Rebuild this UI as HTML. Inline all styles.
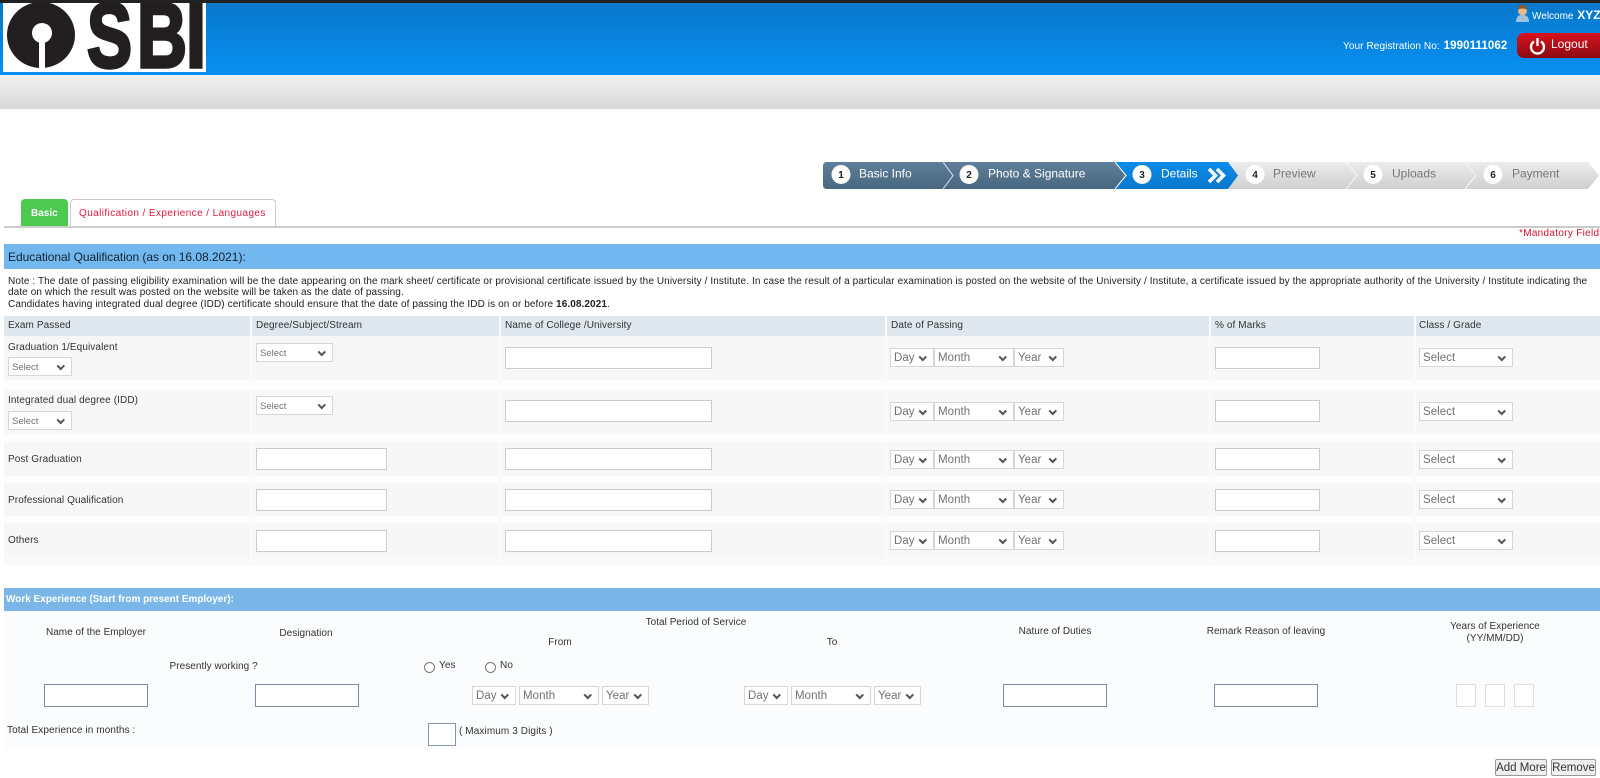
<!DOCTYPE html>
<html lang="en"><head><meta charset="utf-8"><title>SBI Application - Details</title>
<style>
html,body{margin:0;padding:0;background:#fff}
body{width:1600px;height:778px;position:relative;overflow:hidden;font-family:"Liberation Sans",sans-serif;font-size:10px;color:#333}
.a{position:absolute}
.t{position:absolute;white-space:nowrap;line-height:12px;letter-spacing:.1px}
.c{transform:translateX(-50%);letter-spacing:.03px}
.r{position:absolute;left:4px;width:1596px;background:#f7f7f7}
.g{position:absolute;left:4px;width:1596px;background:#fdfdfd}
.i{position:absolute;box-sizing:border-box;background:#fff;border:1px solid #ccc}
.w{border:1px solid #7d8aa3;background:#fff}
.sel{position:absolute;display:block;box-sizing:border-box;height:19px;background:#fff;border:1px solid #d6d6d6}
.sel select{display:block;width:100%;height:100%;box-sizing:border-box;margin:0;padding:1px 0 0 3px;border:0;outline:0;background:transparent;appearance:none;-webkit-appearance:none;font:11.5px "Liberation Sans",sans-serif;letter-spacing:.05px;color:#727272;border-radius:0}
.sel.s select{font-size:9.5px;letter-spacing:0}
.sel::after{content:"";position:absolute;right:8px;top:50%;margin-top:-4px;width:3.5px;height:3.5px;border-right:2px solid #555;border-bottom:2px solid #555;transform:rotate(45deg)}
.h{position:absolute;top:316px;height:20px;background:#dfe7ef}
.sep{position:absolute;width:2px;top:316px;height:249px;background:#fbfbfb}
</style></head><body>

<div class="a" style="left:0;top:0;width:1600px;height:3px;background:#222"></div>
<div class="a" style="left:0;top:3px;width:1600px;height:72px;background:linear-gradient(#0878cb,#0890f2)"></div>
<div class="a" style="left:0;top:75px;width:1600px;height:34px;background:linear-gradient(#f1f1f1,#d8d8d8)"></div>

<svg class="a" style="left:3px;top:3px" width="203" height="69" viewBox="0 0 203 69">
<rect width="203" height="69" fill="#fff"/>
<ellipse cx="38" cy="32" rx="34" ry="33" fill="#231f20"/>
<circle cx="39" cy="30" r="10" fill="#fff"/>
<rect x="36" y="35" width="6" height="32" fill="#fff"/>
<g font-family="Liberation Sans" font-weight="700" font-size="92" fill="#231f20" stroke="#231f20" stroke-width="3.5">
<text x="84" y="64" textLength="45" lengthAdjust="spacingAndGlyphs">S</text>
<text x="134" y="64" textLength="50" lengthAdjust="spacingAndGlyphs">B</text>
<text x="183" y="64" textLength="20" lengthAdjust="spacingAndGlyphs">I</text>
</g>
</svg>

<svg class="a" style="left:1515px;top:4px" width="15" height="19" viewBox="0 0 15 19">
<path d="M1 18c0-5 2-7 6.500-7s6.500 2 6.500 7z" fill="#9fc3dc"/>
<circle cx="7.500" cy="7" r="4.500" fill="#e8b98d"/>
<path d="M3 6c0-4 2-5.500 4.500-5.500S12 2 12 6c-2-2-7-2-9 0z" fill="#8a5a2b"/>
</svg>
<div class="t" style="left:1532px;top:9px;color:#fff;font-size:10px;letter-spacing:0">Welcome <b style="font-size:12px;margin-left:1px">XYZ</b></div>
<div class="t" style="left:1343px;top:40px;color:#fff;font-size:10px;letter-spacing:.1px">Your Registration No: <b style="font-size:11.500px;letter-spacing:.1px;margin-left:1px">1990111062</b></div>
<div class="a" style="left:1517px;top:33px;width:83px;height:25px;border-radius:7px 0 0 7px;background:linear-gradient(#d8121f,#8c0a12)"></div>
<svg class="a" style="left:1529px;top:37px" width="17" height="18" viewBox="0 0 17 18"><path d="M5 4.500a6.500 6.500 0 1 0 7 0" fill="none" stroke="#fff" stroke-width="2.400"/><path d="M8.500 1v8" stroke="#fff" stroke-width="2.400"/></svg>
<div class="t" style="left:1551px;top:38px;color:#fff;font-size:12px;letter-spacing:0">Logout</div>

<svg class="a" style="left:823px;top:162px" width="777" height="27" viewBox="0 0 777 27">
<defs>
<linearGradient id="g1" x1="0" y1="0" x2="0" y2="1"><stop offset="0" stop-color="#5f7f9b"/><stop offset="1" stop-color="#48677f"/></linearGradient>
<linearGradient id="g2" x1="0" y1="0" x2="0" y2="1"><stop offset="0" stop-color="#ededed"/><stop offset="1" stop-color="#cfcfcf"/></linearGradient>
<linearGradient id="g3" x1="0" y1="0" x2="0" y2="1"><stop offset="0" stop-color="#0a8cec"/><stop offset="1" stop-color="#0a78cc"/></linearGradient>
</defs>
<path d="M395 0H765L776 13.500 765 27H395z" fill="url(#g2)"/>
<path d="M4 0H292L303 13.500 292 27H4Q0 27 0 23V4Q0 0 4 0z" fill="url(#g1)"/>
<path d="M292 0H405L415 13.500 405 27H292L303 13.500z" fill="url(#g3)"/>
<path d="M120 0L130 13.500 120 27" fill="none" stroke="#dfe6ec" stroke-width="1"/>
<path d="M292 0L303 13.500 292 27" fill="none" stroke="#fff" stroke-width="1"/>
<path d="M523 0L534 13.500 523 27" fill="none" stroke="#f6f6f6" stroke-width="1"/>
<path d="M642 0L653 13.500 642 27" fill="none" stroke="#f6f6f6" stroke-width="1"/>
<path d="M386 7L392.500 13.500 386 20M394 7L400.500 13.500 394 20" fill="none" stroke="#fff" stroke-width="3.500"/>
<g fill="#fff"><circle cx="18" cy="12.500" r="9.500"/><circle cx="146" cy="12.500" r="9.500"/><circle cx="319" cy="12.500" r="9.500"/><circle cx="432" cy="12.500" r="9.500"/><circle cx="550" cy="12.500" r="9.500"/><circle cx="670" cy="12.500" r="9.500"/></g>
<g font-family="Liberation Sans" font-size="10" fill="#222" font-weight="700" text-anchor="middle">
<text x="18" y="16">1</text><text x="146" y="16">2</text><text x="319" y="16">3</text><text x="432" y="16">4</text><text x="550" y="16">5</text><text x="670" y="16">6</text></g>
<g font-family="Liberation Sans" font-size="12">
<text x="36" y="15.500" fill="#fff">Basic Info</text>
<text x="165" y="15.500" fill="#fff">Photo &amp; Signature</text>
<text x="338" y="15.500" fill="#fff">Details</text>
<text x="450" y="15.500" fill="#777">Preview</text>
<text x="569" y="15.500" fill="#777">Uploads</text>
<text x="689" y="15.500" fill="#777">Payment</text></g>
</svg>

<div class="a" style="left:4px;top:226px;width:1596px;height:1.500px;background:#ccc"></div>
<div class="a" style="left:21px;top:199px;width:47px;height:27px;background:#4dc94f;border-radius:4px 4px 0 0"></div>
<div class="t" style="left:31px;top:208px;color:#fff;font-weight:700;letter-spacing:0">Basic</div>
<div class="a" style="left:70px;top:199px;width:206px;height:27px;box-sizing:border-box;background:#fff;border:1px solid #ccc;border-bottom:0;border-radius:4px 4px 0 0"></div>
<div class="t" style="left:79px;top:208px;color:#e3173e;letter-spacing:.41px">Qualification / Experience / Languages</div>
<div class="t" style="left:1519px;top:228px;color:#d0112f;letter-spacing:.3px">*Mandatory Field</div>

<div class="a" style="left:4px;top:244px;width:1596px;height:25px;background:#72b8ee"></div>
<div class="t" style="left:8px;top:251px;font-size:12px;color:#123;letter-spacing:-.04px">Educational Qualification (as on 16.08.2021):</div>

<div class="t" style="left:8px;top:276px;color:#222;letter-spacing:.095px">Note : The date of passing eligibility examination will be the date appearing on the mark sheet/ certificate or provisional certificate issued by the University / Institute. In case the result of a particular examination is posted on the website of the University / Institute, a certificate issued by the appropriate authority of the University / Institute indicating the</div>
<div class="t" style="left:8px;top:287px;color:#222;letter-spacing:.095px">date on which the result was posted on the website will be taken as the date of passing.</div>
<div class="t" style="left:8px;top:299px;color:#222;letter-spacing:.095px">Candidates having integrated dual degree (IDD) certificate should ensure that the date of passing the IDD is on or before <b>16.08.2021</b>.</div>

<div class="h" style="left:4px;width:1596px"></div>
<div class="t" style="left:8px;top:320px">Exam Passed</div>
<div class="t" style="left:256px;top:320px">Degree/Subject/Stream</div>
<div class="t" style="left:505px;top:320px">Name of College /University</div>
<div class="t" style="left:891px;top:320px">Date of Passing</div>
<div class="t" style="left:1215px;top:320px">% of Marks</div>
<div class="t" style="left:1419px;top:320px">Class / Grade</div>

<div class="r" style="top:336px;height:44px"></div>
<div class="g" style="top:380px;height:10px"></div>
<div class="r" style="top:390px;height:44px"></div>
<div class="g" style="top:434px;height:8px"></div>
<div class="r" style="top:442px;height:34px"></div>
<div class="g" style="top:476px;height:7px"></div>
<div class="r" style="top:483px;height:33px"></div>
<div class="g" style="top:516px;height:7px"></div>
<div class="r" style="top:523px;height:34px"></div>
<div class="g" style="top:557px;height:8px;background:#f9f9f9"></div>
<div class="sep" style="left:250px"></div><div class="sep" style="left:499px"></div><div class="sep" style="left:885px"></div><div class="sep" style="left:1209px"></div><div class="sep" style="left:1414px"></div>

<div class="t" style="left:8px;top:342px">Graduation 1/Equivalent</div>
<span class="sel s" style="left:8px;top:357px;width:64px"><select><option>Select</option></select></span>
<span class="sel s" style="left:256px;top:343px;width:77px"><select><option>Select</option></select></span>
<div class="t" style="left:8px;top:395px">Integrated dual degree (IDD)</div>
<span class="sel s" style="left:8px;top:411px;width:64px"><select><option>Select</option></select></span>
<span class="sel s" style="left:256px;top:396px;width:77px"><select><option>Select</option></select></span>
<div class="t" style="left:8px;top:454px">Post Graduation</div>
<div class="t" style="left:8px;top:495px">Professional Qualification</div>
<div class="t" style="left:8px;top:535px">Others</div>

<div class="i" style="left:256px;top:448px;width:131px;height:22px"></div>
<div class="i" style="left:256px;top:489px;width:131px;height:22px"></div>
<div class="i" style="left:256px;top:530px;width:131px;height:22px"></div>

<div class="i" style="left:505px;top:347px;width:207px;height:22px"></div>
<div class="i" style="left:505px;top:400px;width:207px;height:22px"></div>
<div class="i" style="left:505px;top:448px;width:207px;height:22px"></div>
<div class="i" style="left:505px;top:489px;width:207px;height:22px"></div>
<div class="i" style="left:505px;top:530px;width:207px;height:22px"></div>

<span class="sel" style="left:890px;top:348px;width:44px"><select><option>Day</option></select></span><span class="sel" style="left:934px;top:348px;width:80px"><select><option>Month</option></select></span><span class="sel" style="left:1014px;top:348px;width:50px"><select><option>Year</option></select></span>
<span class="sel" style="left:890px;top:402px;width:44px"><select><option>Day</option></select></span><span class="sel" style="left:934px;top:402px;width:80px"><select><option>Month</option></select></span><span class="sel" style="left:1014px;top:402px;width:50px"><select><option>Year</option></select></span>
<span class="sel" style="left:890px;top:450px;width:44px"><select><option>Day</option></select></span><span class="sel" style="left:934px;top:450px;width:80px"><select><option>Month</option></select></span><span class="sel" style="left:1014px;top:450px;width:50px"><select><option>Year</option></select></span>
<span class="sel" style="left:890px;top:490px;width:44px"><select><option>Day</option></select></span><span class="sel" style="left:934px;top:490px;width:80px"><select><option>Month</option></select></span><span class="sel" style="left:1014px;top:490px;width:50px"><select><option>Year</option></select></span>
<span class="sel" style="left:890px;top:531px;width:44px"><select><option>Day</option></select></span><span class="sel" style="left:934px;top:531px;width:80px"><select><option>Month</option></select></span><span class="sel" style="left:1014px;top:531px;width:50px"><select><option>Year</option></select></span>

<div class="i" style="left:1215px;top:347px;width:105px;height:22px"></div>
<div class="i" style="left:1215px;top:400px;width:105px;height:22px"></div>
<div class="i" style="left:1215px;top:448px;width:105px;height:22px"></div>
<div class="i" style="left:1215px;top:489px;width:105px;height:22px"></div>
<div class="i" style="left:1215px;top:530px;width:105px;height:22px"></div>

<span class="sel" style="left:1419px;top:348px;width:94px"><select><option>Select</option></select></span>
<span class="sel" style="left:1419px;top:402px;width:94px"><select><option>Select</option></select></span>
<span class="sel" style="left:1419px;top:450px;width:94px"><select><option>Select</option></select></span>
<span class="sel" style="left:1419px;top:490px;width:94px"><select><option>Select</option></select></span>
<span class="sel" style="left:1419px;top:531px;width:94px"><select><option>Select</option></select></span>

<div class="a" style="left:4px;top:588px;width:1596px;height:23px;background:#7ab6e8"></div>
<div class="t" style="left:6px;top:594px;color:#fff;font-weight:700;letter-spacing:-.02px">Work Experience (Start from present Employer):</div>
<div class="a" style="left:4px;top:611px;width:1596px;height:138px;background:#fbfcfe"></div>

<div class="t c" style="left:96px;top:627px">Name of the Employer</div>
<div class="t c" style="left:306px;top:628px">Designation</div>
<div class="t c" style="left:696px;top:617px">Total Period of Service</div>
<div class="t c" style="left:560px;top:637px">From</div>
<div class="t c" style="left:832px;top:637px">To</div>
<div class="t c" style="left:1055px;top:626px">Nature of Duties</div>
<div class="t c" style="left:1266px;top:626px">Remark Reason of leaving</div>
<div class="t c" style="left:1495px;top:621px">Years of Experience</div>
<div class="t c" style="left:1495px;top:633px">(YY/MM/DD)</div>

<div class="t" style="left:169.500px;top:661px;letter-spacing:.05px">Presently working ?</div>
<div class="a" style="left:424px;top:662px;width:11px;height:11px;box-sizing:border-box;border:1px solid #777;border-radius:50%;background:#fff"></div>
<div class="t" style="left:439px;top:660px">Yes</div>
<div class="a" style="left:485px;top:662px;width:11px;height:11px;box-sizing:border-box;border:1px solid #777;border-radius:50%;background:#fff"></div>
<div class="t" style="left:500px;top:660px">No</div>

<div class="i w" style="left:44px;top:684px;width:104px;height:23px"></div>
<div class="i w" style="left:255px;top:684px;width:104px;height:23px"></div>
<div class="i w" style="left:1003px;top:684px;width:104px;height:23px"></div>
<div class="i w" style="left:1214px;top:684px;width:104px;height:23px"></div>

<span class="sel" style="left:472px;top:686px;width:44px"><select><option>Day</option></select></span><span class="sel" style="left:519px;top:686px;width:80px"><select><option>Month</option></select></span><span class="sel" style="left:602px;top:686px;width:47px"><select><option>Year</option></select></span>
<span class="sel" style="left:744px;top:686px;width:44px"><select><option>Day</option></select></span><span class="sel" style="left:791px;top:686px;width:80px"><select><option>Month</option></select></span><span class="sel" style="left:874px;top:686px;width:47px"><select><option>Year</option></select></span>

<div class="i" style="left:1456px;top:684px;width:20px;height:23px;border-color:#ddd"></div>
<div class="i" style="left:1485px;top:684px;width:20px;height:23px;border-color:#ddd"></div>
<div class="i" style="left:1514px;top:684px;width:20px;height:23px;border-color:#ddd"></div>

<div class="t" style="left:7px;top:725px">Total Experience in months :</div>
<div class="i" style="left:428px;top:723px;width:28px;height:23px;border-color:#8a94a6"></div>
<div class="t" style="left:459px;top:726px">( Maximum 3 Digits )</div>

<button class="a" style="left:1495px;top:759px;width:52px;height:17px;box-sizing:border-box;padding:0;border:1px solid #999;border-radius:2px;background:#efefef;font:11.500px 'Liberation Sans',sans-serif;color:#333">Add More</button>
<button class="a" style="left:1551px;top:759px;width:45px;height:17px;box-sizing:border-box;padding:0;border:1px solid #999;border-radius:2px;background:#efefef;font:11.500px 'Liberation Sans',sans-serif;color:#333">Remove</button>

</body></html>
